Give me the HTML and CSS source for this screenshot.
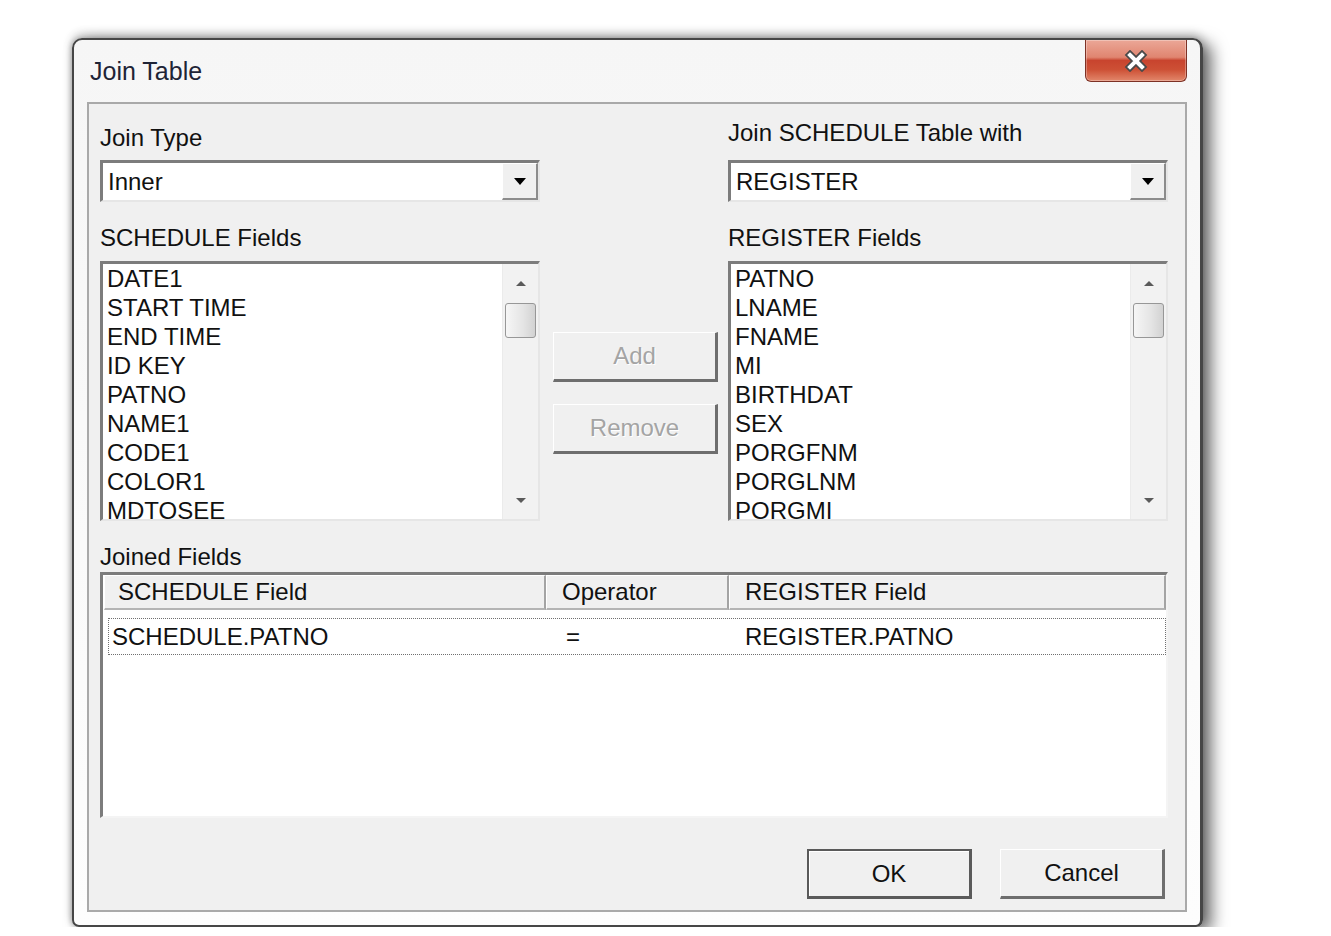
FILE: index.html
```html
<!DOCTYPE html>
<html lang="en">
<head>
    <meta charset="UTF-8">
    <title>Join Table</title>
    <link rel="stylesheet" href="styles.css">
</head>
<body>
    <div class="window">
        <div class="titlebar">
            <span class="title">Join Table</span>
            <button class="close-btn" title="Close">
                <svg width="28" height="22" viewBox="0 0 28 22">
                    <path d="M8 5 L20 17 M20 5 L8 17" stroke="#4a4a4a" stroke-width="7.5" stroke-linecap="square" fill="none"/>
                    <path d="M8 5 L20 17 M20 5 L8 17" stroke="#ffffff" stroke-width="4" stroke-linecap="square" fill="none"/>
                </svg>
            </button>
        </div>

        <div class="panel">
            <!-- Type de jointure / table -->
            <div class="top-row">
                <div class="field">
                    <label class="field-label">Join Type</label>
                    <div class="combo">
                        <span class="combo-value">Inner</span>
                        <span class="combo-arrow"></span>
                    </div>
                </div>
                <div></div>
                <div class="field">
                    <label class="field-label label-high">Join SCHEDULE Table with</label>
                    <div class="combo">
                        <span class="combo-value">REGISTER</span>
                        <span class="combo-arrow"></span>
                    </div>
                </div>
            </div>

            <!-- Listes de champs -->
            <div class="lists-row">
                <div class="field">
                    <label class="field-label">SCHEDULE Fields</label>
                    <div class="listbox">
                        <ul class="items">
                            <li>DATE1</li>
                            <li>START TIME</li>
                            <li>END TIME</li>
                            <li>ID KEY</li>
                            <li>PATNO</li>
                            <li>NAME1</li>
                            <li>CODE1</li>
                            <li>COLOR1</li>
                            <li>MDTOSEE</li>
                        </ul>
                        <div class="scrollbar">
                            <span class="sb-arrow sb-up"></span>
                            <span class="sb-thumb"></span>
                            <span class="sb-track"></span>
                            <span class="sb-arrow sb-down"></span>
                        </div>
                    </div>
                </div>
                <div class="middle-buttons">
                    <button class="win-btn" disabled>Add</button>
                    <button class="win-btn" disabled>Remove</button>
                </div>
                <div class="field">
                    <label class="field-label">REGISTER Fields</label>
                    <div class="listbox">
                        <ul class="items">
                            <li>PATNO</li>
                            <li>LNAME</li>
                            <li>FNAME</li>
                            <li>MI</li>
                            <li>BIRTHDAT</li>
                            <li>SEX</li>
                            <li>PORGFNM</li>
                            <li>PORGLNM</li>
                            <li>PORGMI</li>
                        </ul>
                        <div class="scrollbar">
                            <span class="sb-arrow sb-up"></span>
                            <span class="sb-thumb"></span>
                            <span class="sb-track"></span>
                            <span class="sb-arrow sb-down"></span>
                        </div>
                    </div>
                </div>
            </div>

            <!-- Champs joints -->
            <label class="field-label joined-label">Joined Fields</label>
            <div class="listview">
                <div class="lv-header">
                    <div class="lv-col">SCHEDULE Field</div>
                    <div class="lv-col">Operator</div>
                    <div class="lv-col">REGISTER Field</div>
                </div>
                <div class="lv-row">
                    <span class="lv-cell">SCHEDULE.PATNO</span>
                    <span class="lv-cell lv-op">=</span>
                    <span class="lv-cell lv-right">REGISTER.PATNO</span>
                </div>
            </div>

            <div class="footer">
                <button class="win-btn default">OK</button>
                <button class="win-btn">Cancel</button>
            </div>
        </div>
    </div>
</body>
</html>
```

FILE: styles.css
```css
body {
    margin: 0;
    background-color: #fff;
    font-family: "Liberation Sans", Arial, sans-serif;
    font-size: 24px;
    color: #111;
}
.window {
    box-sizing: border-box;
    width: 1131px;
    height: 889px;
    margin: 38px 0 0 72px;
    border: 2px solid #464646;
    border-right-width: 3px;
    border-radius: 10px 10px 7px 7px;
    background: linear-gradient(#f6f6f6, #fdfdfd);
    box-shadow: 9px 5px 16px rgba(0,0,0,0.55), 0 -4px 10px rgba(0,0,0,0.22), -2px 0 4px rgba(0,0,0,0.15);
    display: flex;
    flex-direction: column;
}
.titlebar {
    height: 62px;
    display: flex;
    align-items: flex-start;
    justify-content: space-between;
    padding: 0 13px 0 16px;
}
.title {
    line-height: 62px;
    font-size: 25px;
    color: #1e2436;
}
.close-btn {
    width: 102px;
    height: 42px;
    padding: 0;
    border: 1px solid #7d3125;
    border-top: none;
    border-radius: 0 0 6px 6px;
    background: linear-gradient(#eba797 0%, #e08570 42%, #c8442e 50%, #cd5035 72%, #e2876b 100%);
    box-shadow: inset 0 0 0 1px rgba(255,255,255,0.3);
    display: flex;
    align-items: center;
    justify-content: center;
}
.panel {
    box-sizing: border-box;
    height: 810px;
    margin: 0 13px 0 13px;
    border: 2px solid #a9a9a9;
    background-color: #f0f0f0;
    padding: 15px 17px 0 11px;
}
.top-row, .lists-row {
    display: grid;
    grid-template-columns: 440px 188px 440px;
}
.lists-row {
    margin-top: 22px;
}
.field {
    display: flex;
    flex-direction: column;
    justify-content: flex-end;
}
.field-label {
    display: block;
    line-height: 28px;
    margin-bottom: 8px;
}
.label-high {
    margin-bottom: 13px;
}
.lists-row .field-label {
    margin-bottom: 9px;
}
.combo {
    box-sizing: border-box;
    height: 42px;
    display: flex;
    background-color: #fff;
    border-style: solid;
    border-width: 3px 2px 2px 3px;
    border-color: #7c7c7c #e6e6e6 #e6e6e6 #7c7c7c;
}
.combo-value {
    flex: 1;
    line-height: 37px;
    padding-left: 5px;
}
.combo-arrow {
    box-sizing: border-box;
    width: 36px;
    background-color: #f0f0f0;
    border-style: solid;
    border-width: 1px 2px 2px 1px;
    border-color: #fff #8c8c8c #8c8c8c #fff;
    display: flex;
    align-items: center;
    justify-content: center;
}
.combo-arrow::after {
    content: "";
    border-left: 6px solid transparent;
    border-right: 6px solid transparent;
    border-top: 7px solid #000;
}
.listbox {
    box-sizing: border-box;
    height: 260px;
    display: flex;
    background-color: #fff;
    border-style: solid;
    border-width: 3px 2px 2px 3px;
    border-color: #7c7c7c #e6e6e6 #e6e6e6 #7c7c7c;
}
.items {
    flex: 1;
    list-style: none;
    margin: 0;
    padding: 0 0 0 4px;
    line-height: 29px;
    overflow: hidden;
}
.scrollbar {
    width: 35px;
    background-color: #f2f2f2;
    border-left: 1px solid #ebebeb;
    display: flex;
    flex-direction: column;
}
.sb-arrow {
    height: 38px;
    display: flex;
    align-items: center;
    justify-content: center;
}
.sb-up::after {
    content: "";
    border-left: 5px solid transparent;
    border-right: 5px solid transparent;
    border-bottom: 5px solid #5a5a5a;
}
.sb-down::after {
    content: "";
    border-left: 5px solid transparent;
    border-right: 5px solid transparent;
    border-top: 5px solid #5a5a5a;
}
.sb-thumb {
    height: 33px;
    margin: 1px 2px 0;
    border: 1px solid #979797;
    border-radius: 3px;
    background: linear-gradient(to right, #f6f6f6, #e4e4e4 60%, #d2d2d2);
}
.sb-track {
    flex: 1;
}
.middle-buttons {
    display: flex;
    flex-direction: column;
    gap: 22px;
    padding: 108px 0 0 13px;
}
.win-btn {
    box-sizing: border-box;
    width: 165px;
    height: 50px;
    padding: 0;
    font-family: inherit;
    font-size: 24px;
    color: #111;
    background-color: #f0f0f0;
    border-style: solid;
    border-width: 1px 3px 3px 1px;
    border-color: #fff #6e6e6e #6e6e6e #fff;
}
.win-btn:disabled {
    color: #a4a4a4;
    text-shadow: 1px 1px 0 #fff;
}
.win-btn.default {
    border-width: 2px 3px 3px 2px;
    border-color: #5a5a5a;
    box-shadow: inset 1px 1px 0 #fff;
}
.joined-label {
    margin: 22px 0 1px;
}
.listview {
    box-sizing: border-box;
    height: 246px;
    background-color: #fff;
    border-style: solid;
    border-width: 3px 2px 2px 3px;
    border-color: #7c7c7c #f4f4f4 #f4f4f4 #7c7c7c;
}
.lv-header {
    display: grid;
    grid-template-columns: 442px 183px 437px;
    height: 35px;
    margin-left: 1px;
}
.lv-col {
    box-sizing: border-box;
    background-color: #f0f0f0;
    border-style: solid;
    border-width: 1px 2px 2px 1px;
    border-color: #fff #a4a4a4 #b4b4b4 #fff;
    line-height: 32px;
    padding-left: 13px;
}
.lv-col + .lv-col {
    padding-left: 15px;
}
.lv-row {
    display: grid;
    grid-template-columns: 436px 183px 1fr;
    height: 37px;
    margin: 8px 0 0 5px;
    box-sizing: border-box;
    border: 1px dotted #707070;
    line-height: 35px;
}
.lv-cell {
    padding-left: 3px;
}
.lv-op {
    padding-left: 21px;
}
.lv-right {
    padding-left: 17px;
}
.footer {
    display: flex;
    justify-content: flex-end;
    gap: 28px;
    margin-top: 31px;
    padding-right: 3px;
}
```
